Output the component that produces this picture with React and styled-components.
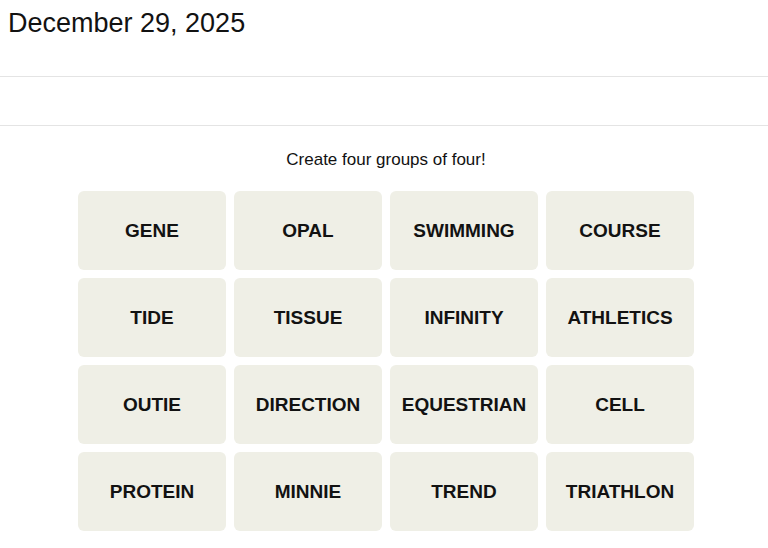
import React from "react";
import styled, { createGlobalStyle } from "styled-components";

const GlobalStyle = createGlobalStyle`
    body {
        margin: 0;
        background: #ffffff;
        font-family: "Liberation Sans", Arial, sans-serif;
        color: #121212;
    }
`;

const words = [
    "GENE", "OPAL", "SWIMMING", "COURSE",
    "TIDE", "TISSUE", "INFINITY", "ATHLETICS",
    "OUTIE", "DIRECTION", "EQUESTRIAN", "CELL",
    "PROTEIN", "MINNIE", "TREND", "TRIATHLON",
];

const App = () => {
    return (
        <>
            <GlobalStyle />
            <Header>
                <DateTitle>December 29, 2025</DateTitle>
            </Header>
            <Toolbar />
            <Main>
                <Prompt>Create four groups of four!</Prompt>
                <Board>
                    {words.map((word) => (
                        <Tile key={word}>{word}</Tile>
                    ))}
                </Board>
            </Main>
        </>
    );
};

const Header = styled.header`
    height: 77px;
    padding-left: 8px;
    box-sizing: border-box;
    border-bottom: 1px solid #e4e4e4;
`;

const DateTitle = styled.h1`
    margin: 0;
    padding-top: 10px;
    font-size: 27px;
    line-height: 27px;
    font-weight: 400;
    color: #121212;
`;

const Toolbar = styled.div`
    height: 48px;
    border-bottom: 1px solid #e4e4e4;
`;

const Main = styled.main`
    display: flex;
    flex-direction: column;
    align-items: center;
    padding-left: 4px;
`;

const Prompt = styled.p`
    margin: 25px 0 23px;
    font-size: 17px;
    line-height: 17px;
    color: #121212;
`;

const Board = styled.div`
    display: grid;
    grid-template-columns: repeat(4, 148px);
    grid-auto-rows: 79px;
    gap: 8px;
`;

const Tile = styled.div`
    display: flex;
    align-items: center;
    justify-content: center;
    background: #efefe6;
    border-radius: 6px;
    font-size: 19px;
    font-weight: 700;
    color: #121212;
`;

export default App;
